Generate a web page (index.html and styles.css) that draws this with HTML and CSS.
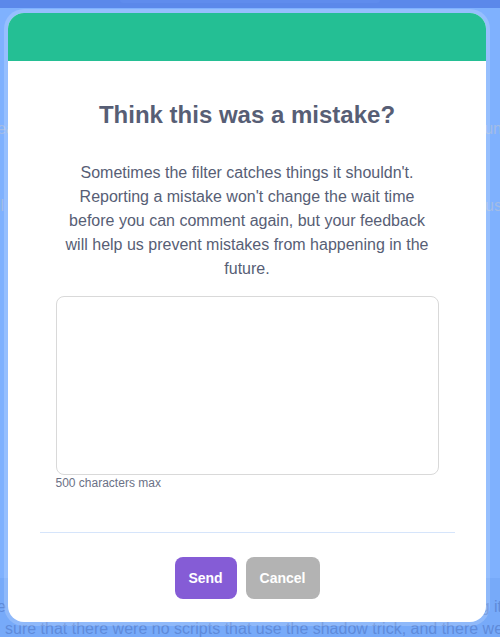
FILE: index.html
```html
<!DOCTYPE html>
<html lang="en">
<head>
<meta charset="utf-8">
<title>Think this was a mistake?</title>
<link rel="stylesheet" href="styles.css">
</head>
<body>
<div class="topbar"><div class="topbar-glow"></div></div>
<div class="page">
  <div class="bg-row bg-row-1"><span class="bg-left">ea</span><span class="bg-right">un</span></div>
  <div class="bg-row bg-row-2"><span class="bg-left">ll</span><span class="bg-right">us</span></div>
  <div class="bg-section">
    <div class="bg-row bg-row-3"><span class="bg-left dark">e</span><span class="bg-right dark">g it</span></div>
    <div class="bg-line">sure that there were no scripts that use the shadow trick, and there were</div>
  </div>
</div>

<div class="modal">
  <div class="modal-header"></div>
  <div class="modal-body">
    <h1 class="modal-title">Think this was a mistake?</h1>
    <p class="modal-text">Sometimes the filter catches things it shouldn't.<br>Reporting a mistake won't change the wait time<br>before you can comment again, but your feedback<br>will help us prevent mistakes from happening in the<br>future.</p>
    <div class="field">
      <textarea class="feedback" maxlength="500"></textarea>
      <div class="caption">500 characters max</div>
    </div>
    <div class="divider"></div>
    <div class="actions">
      <button class="btn btn-send">Send</button>
      <button class="btn btn-cancel">Cancel</button>
    </div>
  </div>
</div>
</body>
</html>
```

FILE: styles.css
```css
html, body {
  margin: 0;
  padding: 0;
}
body {
  width: 500px;
  height: 637px;
  overflow: hidden;
  background: #7fb1fe;
  font-family: "Liberation Sans", Arial, sans-serif;
  position: relative;
}
.topbar {
  height: 8px;
  background: #5b88ea;
  position: relative;
}
.topbar-glow {
  margin: 0 auto;
  width: 260px;
  height: 3px;
  background: #5f8ced;
  border-radius: 0 0 6px 6px;
}
.page {
  display: flex;
  flex-direction: column;
}
.bg-row {
  display: flex;
  justify-content: space-between;
  font-size: 16px;
  line-height: 20px;
  color: #a3bce6;
}
.bg-row-1 {
  margin-top: 111px;
}
.bg-row-2 {
  margin-top: 57px;
}
.bg-left {
  margin-left: -3px;
}
.bg-right {
  margin-right: -2px;
}
.bg-section {
  margin-top: 362px;
  background: #77aaf9;
  padding-top: 19px;
}
.dark {
  color: #5f8bd9;
}
.bg-row-3 {
  line-height: 20px;
}
.bg-line {
  font-size: 16px;
  line-height: 20px;
  color: #5f8bd9;
  white-space: nowrap;
  padding-left: 5px;
  margin-top: 2px;
}

.modal {
  position: absolute;
  left: 8px;
  top: 13px;
  width: 478px;
  height: 609px;
  background: #ffffff;
  border-radius: 16px;
  box-shadow: 0 0 0 4px rgba(255, 255, 255, 0.18);
  overflow: hidden;
  display: flex;
  flex-direction: column;
  color: #575e75;
}
.modal-header {
  height: 48px;
  background: #24bf94;
  flex-shrink: 0;
}
.modal-body {
  display: flex;
  flex-direction: column;
  align-items: center;
  padding-top: 38px;
}
.modal-title {
  margin: 0;
  font-size: 24px;
  line-height: 32px;
  font-weight: bold;
}
.modal-text {
  margin: 30px 0 0;
  width: 383px;
  font-size: 16px;
  line-height: 24px;
  text-align: center;
}
.field {
  margin-top: 15px;
  width: 383px;
  display: flex;
  flex-direction: column;
}
.feedback {
  box-sizing: border-box;
  width: 383px;
  height: 179px;
  margin: 0;
  border: 1px solid #d9d9d9;
  border-radius: 8px;
  resize: none;
  outline: none;
  font-family: inherit;
  display: block;
}
.caption {
  font-size: 12px;
  line-height: 16px;
  color: #6b7186;
}
.divider {
  margin-top: 41px;
  width: 415px;
  height: 1px;
  background: #d6e5fb;
}
.actions {
  margin-top: 24px;
  display: flex;
  gap: 9px;
}
.btn {
  height: 42px;
  border: none;
  border-radius: 8px;
  color: #ffffff;
  font-family: inherit;
  font-size: 14px;
  font-weight: bold;
  padding: 0;
  margin: 0;
}
.btn-send {
  width: 62px;
  background: #855cd6;
}
.btn-cancel {
  width: 74px;
  background: #b3b3b3;
}
```
